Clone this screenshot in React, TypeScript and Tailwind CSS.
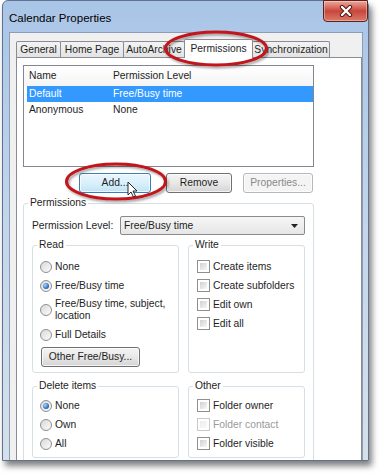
import React from "react";

const Radio = ({ checked }: { checked?: boolean }) => (
  <span className="w-[12px] h-[12px] shrink-0 rounded-full border border-[#8e8f8f] bg-linear-to-br from-[#d9d9d9] to-[#fbfbfb] flex items-center justify-center">
    {checked && (
      <span className="w-[6px] h-[6px] rounded-full bg-[radial-gradient(circle_at_35%_35%,#a8d6ff,#1f62b8_70%)]" />
    )}
  </span>
);

const Check = ({ disabled }: { disabled?: boolean }) => (
  <span
    className={`w-[13px] h-[13px] shrink-0 border p-[2px] bg-white ${
      disabled ? "border-[#c9c9c9]" : "border-[#8e8f8f]"
    }`}
  >
    <span
      className={`block w-full h-full bg-linear-to-br ${
        disabled ? "from-[#ececec] to-[#fafafa]" : "from-[#cfd1d4] to-[#f7f7f7]"
      }`}
    />
  </span>
);

const RadioRow = ({ label, checked }: { label: string; checked?: boolean }) => (
  <div className="h-[19px] flex items-center gap-[3px]">
    <Radio checked={checked} />
    <span>{label}</span>
  </div>
);

const CheckRow = ({ label, disabled }: { label: string; disabled?: boolean }) => (
  <div className={`h-[19px] flex items-center gap-[3px] ${disabled ? "text-[#9a9a9a]" : ""}`}>
    <Check disabled={disabled} />
    <span>{label}</span>
  </div>
);

const Btn = ({
  children,
  className = "",
  variant = "normal",
}: {
  children: React.ReactNode;
  className?: string;
  variant?: "normal" | "hover" | "disabled";
}) => {
  const look = {
    normal: "border-[#707070] bg-linear-to-b from-[#f4f4f4] via-[#e8e8e8] to-[#d4d4d4]",
    hover: "border-[#3c7fb1] bg-linear-to-b from-[#eaf6fd] via-[#d9f0fc] to-[#bee4f8]",
    disabled: "border-[#b5b9bc] bg-[#f4f4f4] text-[#8a8a8a]",
  }[variant];
  return (
    <div
      className={`h-[20px] rounded-[3px] border flex items-center justify-center shadow-[inset_0_0_0_1px_rgba(255,255,255,0.7)] ${look} ${className}`}
    >
      {children}
    </div>
  );
};

const Group = ({
  title,
  className = "",
  children,
}: {
  title: string;
  className?: string;
  children: React.ReactNode;
}) => (
  <fieldset className={`border border-[#d5dfe5] rounded-[3px] p-0 m-0 min-w-0 ${className}`}>
    <legend className="ml-[4px] px-[2px] leading-[12px]">{title}</legend>
    {children}
  </fieldset>
);

const tabs = [
  { label: "General", w: "w-[45px]" },
  { label: "Home Page", w: "w-[64px]" },
  { label: "AutoArchive", w: "w-[62px]" },
  { label: "Permissions", w: "w-[69px]", active: true },
  { label: "Synchronization", w: "w-[78px]" },
];

export default function App() {
  return (
    <div className="relative w-[384px] h-[476px] bg-white overflow-hidden font-['Liberation_Sans',Arial,sans-serif] text-[10.3px] text-[#1e1e1e]">
      {/* window */}
      <div className="ml-[2px] w-[367px] h-[461px] flex flex-col border border-[#5f7390] rounded-t-[6px] bg-linear-to-b from-[#a9c5e7] via-[#c3d6ec] to-[#d6e0ea] shadow-[3px_5px_6px_rgba(0,0,0,0.5)]">
        <div className="h-[31px] shrink-0 flex justify-between items-start pl-[6px]">
          <span className="pt-[10px] text-[11.5px] leading-[14px] text-black">Calendar Properties</span>
          <div className="w-[45px] h-[22px] -mt-px rounded-b-[4px] border border-[#5e2019] bg-linear-to-b from-[#e9a89d] via-[#c8453a] to-[#d9796a] flex items-center justify-center shadow-[inset_0_0_0_1px_rgba(255,255,255,0.35)]">
            <svg width="14" height="12" viewBox="0 0 14 12">
              <path d="M3 2 L11 10 M11 2 L3 10" stroke="#4a1712" strokeWidth="4.2" strokeLinecap="round" />
              <path d="M3 2 L11 10 M11 2 L3 10" stroke="#ffffff" strokeWidth="2.4" strokeLinecap="round" />
            </svg>
          </div>
        </div>

        <div className="flex-1 flex pl-[6px] pr-[5px] min-h-0">
          <div className="flex-1 flex flex-col border border-b-0 border-[#8b9db5] bg-[#f0f0f0] pl-[6px] pt-[6px] overflow-hidden">
            {/* tabs */}
            <div className="h-[18px] shrink-0 flex items-end">
              {tabs.map((t) => (
                <div
                  key={t.label}
                  className={`${t.w} -mr-px flex items-center justify-center border border-b-0 border-[#898c95] rounded-t-[2px] ${
                    t.active
                      ? "h-[19px] -mb-px relative z-10 bg-white"
                      : "h-[16px] bg-linear-to-b from-[#f3f3f3] to-[#e3e3e3]"
                  }`}
                >
                  {t.label}
                </div>
              ))}
            </div>

            {/* tab page */}
            <div className="flex-1 border border-b-0 border-[#898c95] bg-white pl-[6px] pt-[7px]">
              <div className="w-[291px]">
                {/* list */}
                <div className="h-[102px] border border-[#828790] bg-white">
                  <div className="h-[20px] flex items-center bg-linear-to-b from-white to-[#f4f4f4]">
                    <span className="w-[89px] pl-[5px]">Name</span>
                    <span>Permission Level</span>
                  </div>
                  <div className="h-[16px] ml-[3px] flex items-center bg-[#3399ff] text-white">
                    <span className="w-[86px] pl-[2px]">Default</span>
                    <span>Free/Busy time</span>
                  </div>
                  <div className="h-[16px] ml-[3px] flex items-center">
                    <span className="w-[86px] pl-[2px]">Anonymous</span>
                    <span>None</span>
                  </div>
                </div>

                {/* buttons */}
                <div className="mt-[6px] flex">
                  <Btn variant="hover" className="ml-[56px] w-[72px]">
                    Add...
                  </Btn>
                  <Btn className="ml-[15px] w-[66px]">Remove</Btn>
                  <Btn variant="disabled" className="ml-[11px] w-[70px]">
                    Properties...
                  </Btn>
                </div>

                {/* permissions */}
                <Group title="Permissions" className="mt-[4px]">
                  <div className="pt-[7px] pl-[8px] pr-[8px] pb-[10px]">
                    <div className="h-[19px] flex items-center">
                      <span className="w-[88px]">Permission Level:</span>
                      <div className="w-[185px] h-[19px] border border-[#8a8a8a] rounded-[2px] bg-linear-to-b from-[#f6f6f6] to-[#e6e6e6] flex items-center justify-between pl-[3px] pr-[6px]">
                        <span>Free/Busy time</span>
                        <svg width="7" height="4" viewBox="0 0 7 4">
                          <path d="M0 0 H7 L3.5 4 Z" fill="#222" />
                        </svg>
                      </div>
                    </div>

                    <div className="mt-[4px] flex gap-[9px]">
                      <Group title="Read" className="w-[147px]">
                        <div className="pt-[6px] pl-[7px] pb-[5px]">
                          <RadioRow label="None" />
                          <RadioRow label="Free/Busy time" checked />
                          <div className="py-[3px] flex items-center gap-[3px]">
                            <Radio />
                            <span className="leading-[12px]">
                              Free/Busy time, subject,
                              <br />
                              location
                            </span>
                          </div>
                          <RadioRow label="Full Details" />
                          <Btn className="mt-[3px] ml-[1px] w-[99px]">Other Free/Busy...</Btn>
                        </div>
                      </Group>
                      <Group title="Write" className="w-[117px]">
                        <div className="pt-[6px] pl-[8px]">
                          <CheckRow label="Create items" />
                          <CheckRow label="Create subfolders" />
                          <CheckRow label="Edit own" />
                          <CheckRow label="Edit all" />
                        </div>
                      </Group>
                    </div>

                    <div className="mt-[7px] flex gap-[9px]">
                      <Group title="Delete items" className="w-[147px]">
                        <div className="pt-[4px] pl-[7px] pb-[4px]">
                          <RadioRow label="None" checked />
                          <RadioRow label="Own" />
                          <RadioRow label="All" />
                        </div>
                      </Group>
                      <Group title="Other" className="w-[117px]">
                        <div className="pt-[4px] pl-[8px] pb-[4px]">
                          <CheckRow label="Folder owner" />
                          <CheckRow label="Folder contact" disabled />
                          <CheckRow label="Folder visible" />
                        </div>
                      </Group>
                    </div>
                  </div>
                </Group>
              </div>
            </div>
          </div>
        </div>
      </div>

      {/* annotations */}
      <svg className="absolute inset-0 pointer-events-none" width="384" height="476">
        <defs>
          <filter id="sh" x="-20%" y="-30%" width="140%" height="160%">
            <feDropShadow dx="1.5" dy="2" stdDeviation="1.2" floodColor="#000" floodOpacity="0.35" />
          </filter>
        </defs>
        <ellipse cx="216" cy="48.5" rx="50.5" ry="16.5" fill="none" stroke="#c0141b" strokeWidth="3" filter="url(#sh)" />
        <ellipse cx="116" cy="181.5" rx="49.5" ry="17.5" fill="none" stroke="#c0141b" strokeWidth="3" filter="url(#sh)" />
        <path
          d="M128 182 L128 195 L131 192 L133.5 197 L135.5 196 L133 191 L137 191 Z"
          fill="#fff"
          stroke="#111"
          strokeWidth="0.9"
          strokeLinejoin="round"
        />
      </svg>
    </div>
  );
}
